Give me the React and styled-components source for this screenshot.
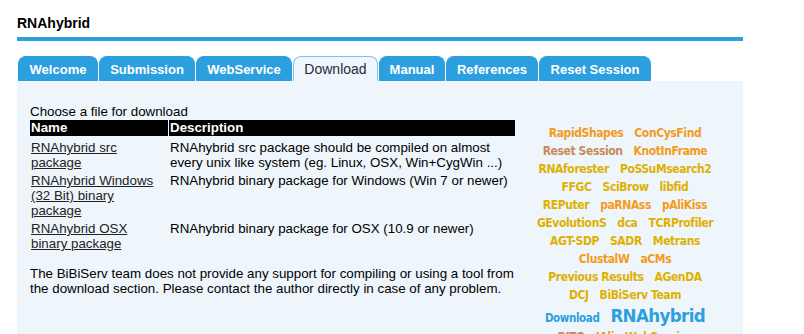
import styled, { createGlobalStyle } from 'styled-components'

const Global = createGlobalStyle`
  body {
    margin: 0;
    background: #fff;
    font-family: "Liberation Sans", Arial, sans-serif;
    color: #000;
  }
`

const blue = "#2c9fdf"

const Page = styled.div`
  width: 726px;
  padding: 14px 0 0 17px;
`

const Title = styled.h1`
  margin: 0;
  font-size: 14px;
  font-weight: bold;
  line-height: 18px;
  padding-bottom: 5px;
  border-bottom: 4px solid ${blue};
`

const TabBar = styled.div`
  display: flex;
  gap: 1px;
  margin-top: 15px;
  padding-left: 1px;
`

const Tab = styled.div`
  width: ${p => p.$w}px;
  height: 25px;
  box-sizing: border-box;
  text-align: center;
  border-radius: 8px 8px 0 0;
  font-size: ${p => (p.$active ? "14px" : "13px")};
  font-weight: ${p => (p.$active ? "normal" : "bold")};
  line-height: 25px;
  background: ${p => (p.$active ? "#eef6fc" : blue)};
  color: ${p => (p.$active ? "#2a2a3a" : "#fff")};
  border: 1px solid ${p => (p.$active ? "#7fc3ec" : blue)};
  border-bottom: none;
  white-space: nowrap;
`

const Panel = styled.div`
  background: #eef6fc;
  height: 260px;
  display: flex;
  padding: 23px 0 0 13px;
  box-sizing: border-box;
  overflow: hidden;
`

const Main = styled.div`
  width: 486px;
  font-size: 13.33px;
  line-height: 15px;
`

const Caption = styled.div`
  margin-bottom: 1px;
`

const Table = styled.table`
  border-collapse: separate;
  border-spacing: 1px 0;
  margin-left: -1px;
  width: 487px;
  font-size: 13.33px;
  line-height: 15px;

  th {
    background: #000;
    color: #fff;
    text-align: left;
    font-weight: bold;
    padding: 0 1px;
    height: 16px;
    line-height: 16px;
  }

  td {
    vertical-align: top;
    padding: 3px 1px 0;
  }

  tr:first-child td {
    padding-top: 4px;
  }

  td:first-child {
    padding-right: 8px;
  }
`

const FileLink = styled.a`
  color: #222;
  text-decoration: underline;
  cursor: pointer;
`

const Note = styled.p`
  margin: 15px 0 0;
`

const Cloud = styled.div`
  width: 190px;
  margin: 20px 0 0 14px;
  display: flex;
  flex-direction: column;
  align-items: center;
`

const CloudRow = styled.div`
  display: flex;
  align-items: baseline;
  gap: 11px;
  height: ${p => p.$h || 18}px;
  line-height: ${p => p.$h || 18}px;
  white-space: nowrap;
`

const Word = styled.span`
  font-family: "Liberation Sans Narrow", "DejaVu Sans", sans-serif;
  font-stretch: condensed;
  font-weight: bold;
  font-size: ${p => p.$size || 12}px;
  color: ${p => p.$c};
  letter-spacing: ${p => (p.$size > 16 ? "-0.6px" : "-0.4px")};
  cursor: pointer;
`

const OR = "#f59a1b"
const BR = "#c98a5a"
const GD = "#dfb000"
const BL = "#2c9fdf"

const cloud = [
  [["RapidShapes", OR], ["ConCysFind", OR]],
  [["Reset Session", BR], ["KnotInFrame", OR]],
  [["RNAforester", GD], ["PoSSuMsearch2", GD]],
  [["FFGC", GD], ["SciBrow", GD], ["libfid", GD]],
  [["REPuter", GD], ["paRNAss", OR], ["pAliKiss", OR]],
  [["GEvolutionS", GD], ["dca", GD], ["TCRProfiler", GD]],
  [["AGT-SDP", GD], ["SADR", GD], ["Metrans", GD]],
  [["ClustalW", OR], ["aCMs", OR]],
  [["Previous Results", GD], ["AGenDA", GD]],
  [["DCJ", GD], ["BiBiServ Team", GD]],
  [["Download", BL, 11.5], ["RNAhybrid", BL, 18.5]],
  [["BITO", BR], ["JAli", OR], ["WebService", GD]],
]

const tabs = [
  ["Welcome", 80],
  ["Submission", 96],
  ["WebService", 96],
  ["Download", 85, true],
  ["Manual", 66],
  ["References", 92],
  ["Reset Session", 112],
]

const files = [
  ["RNAhybrid src package", "RNAhybrid src package should be compiled on almost every unix like system (eg. Linux, OSX, Win+CygWin ...)"],
  ["RNAhybrid Windows (32 Bit) binary package", "RNAhybrid binary package for Windows (Win 7 or newer)"],
  ["RNAhybrid OSX binary package", "RNAhybrid binary package for OSX (10.9 or newer)"],
]

export default function App() {
  return (
    <Page>
      <Global />
      <Title>RNAhybrid</Title>
      <TabBar>
        {tabs.map(([name, w, active]) => (
          <Tab key={name} $w={w} $active={active}>{name}</Tab>
        ))}
      </TabBar>
      <Panel>
        <Main>
          <Caption>Choose a file for download</Caption>
          <Table>
            <colgroup>
              <col style={{ width: 138 }} />
              <col />
            </colgroup>
            <thead>
              <tr>
                <th>Name</th>
                <th>Description</th>
              </tr>
            </thead>
            <tbody>
              {files.map(([name, desc]) => (
                <tr key={name}>
                  <td><FileLink>{name}</FileLink></td>
                  <td>{desc}</td>
                </tr>
              ))}
            </tbody>
          </Table>
          <Note>
            The BiBiServ team does not provide any support for compiling or using a tool from
            the download section. Please contact the author directly in case of any problem.
          </Note>
        </Main>
        <Cloud>
          {cloud.map((row, i) => (
            <CloudRow key={i} $h={row.some(w => w[2] > 16) ? 24 : 18}>
              {row.map(([w, c, s]) => (
                <Word key={w} $c={c} $size={s}>{w}</Word>
              ))}
            </CloudRow>
          ))}
        </Cloud>
      </Panel>
    </Page>
  )
}
